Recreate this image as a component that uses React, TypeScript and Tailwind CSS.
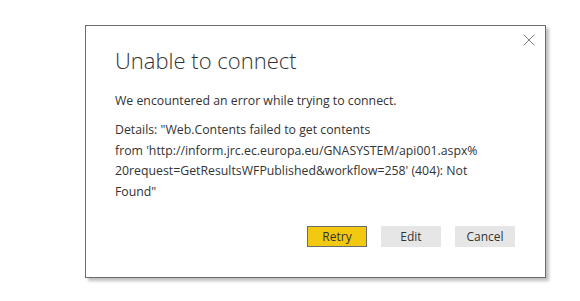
import { X } from "lucide-react";

export default function App() {
  return (
    <div
      className="min-h-[301px] bg-white pl-[85px] pt-[25px] text-[#333]"
      style={{ fontFamily: '"Segoe UI", "Open Sans", "Noto Sans", sans-serif' }}
    >
      <div className="relative h-[253px] w-[461px] border border-[#6b6b6b] bg-white shadow-[3px_3px_3px_rgba(0,0,0,0.25)]">
        <button
          type="button"
          aria-label="Close"
          className="absolute right-[6px] top-[4px] flex size-[20px] items-center justify-center text-[#666]"
        >
          <X size={20} strokeWidth={1} />
        </button>

        <div className="pl-[29px] pt-[18px]">
          <h1 className="text-[22px] font-light leading-[32px] text-[#333]">
            Unable to connect
          </h1>
          <p className="mt-[15px] text-[12.3px] leading-[20px]">
            We encountered an error while trying to connect.
          </p>
          <p className="mt-[9px] whitespace-nowrap text-[12.3px] leading-[20.5px]">
            Details: "Web.Contents failed to get contents
            <br />
            from 'http://inform.jrc.ec.europa.eu/GNASYSTEM/api001.aspx%
            <br />
            20request=GetResultsWFPublished&amp;workflow=258' (404): Not
            <br />
            Found"
          </p>
        </div>

        <div className="mt-[24px] flex justify-end gap-[14px] pr-[30px]">
          <button
            type="button"
            className="h-[21px] w-[60px] border border-[#6b6b6b] bg-[#f2c811] text-[12px] leading-[19px] text-[#333]"
          >
            Retry
          </button>
          <button
            type="button"
            className="h-[21px] w-[60px] bg-[#e6e6e6] text-[12px] leading-[21px] text-[#333]"
          >
            Edit
          </button>
          <button
            type="button"
            className="h-[21px] w-[60px] bg-[#e6e6e6] text-[12px] leading-[21px] text-[#333]"
          >
            Cancel
          </button>
        </div>
      </div>
    </div>
  );
}
